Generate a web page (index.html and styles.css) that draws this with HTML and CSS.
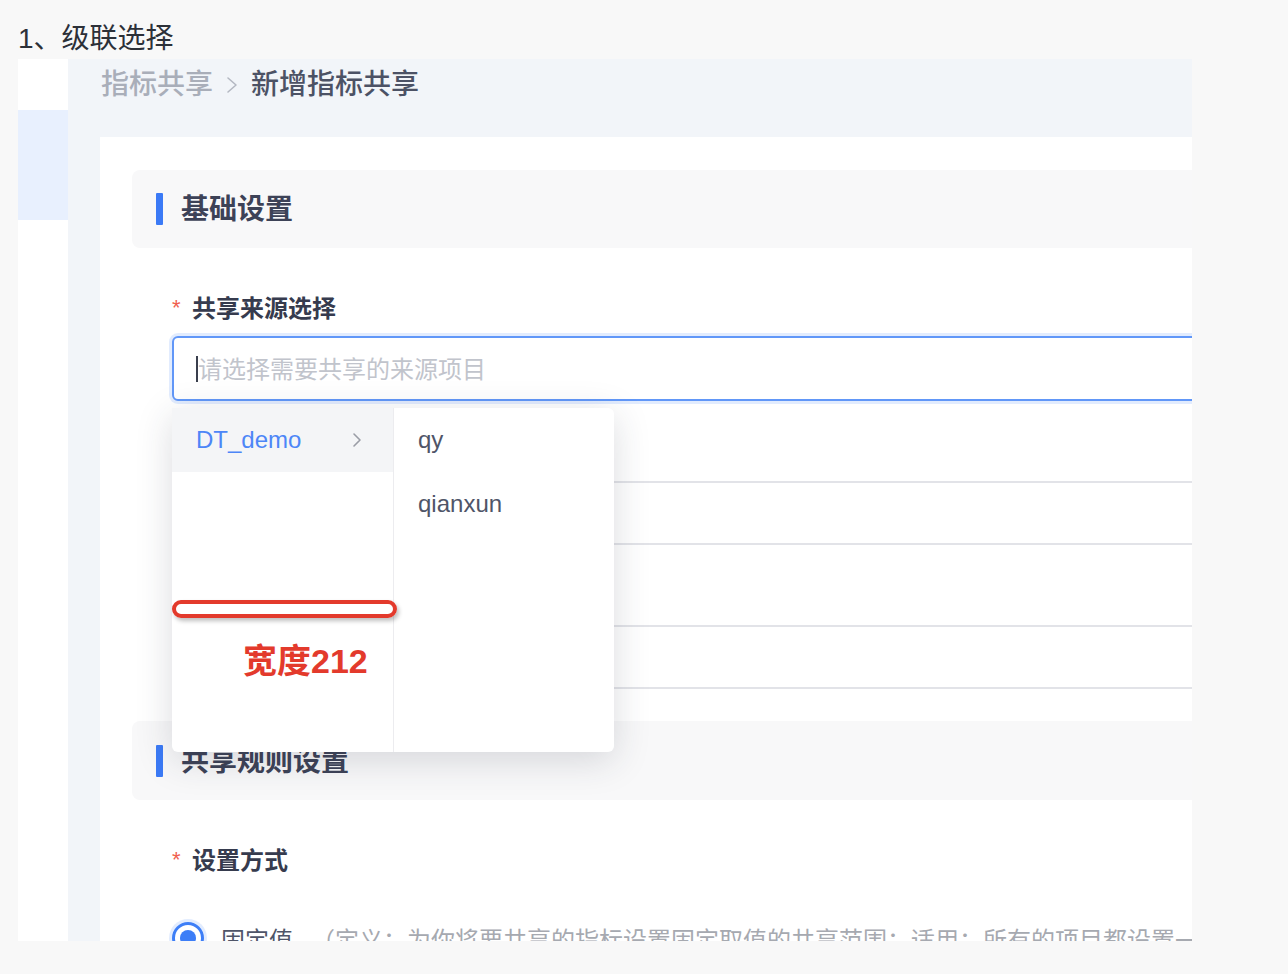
FILE: index.html
```html
<!DOCTYPE html>
<html lang="zh-CN">
<head>
<meta charset="utf-8">
<title>级联选择</title>
<link rel="stylesheet" href="styles.css">
</head>
<body>
<h1 class="doc-title">1、级联选择</h1>
<div class="shot">
  <aside class="sidebar"><div class="side-active"></div></aside>
  <main class="main">
    <div class="crumbs">
      <span class="crumb-prev">指标共享</span>
      <svg class="crumb-sep" width="12" height="20" viewBox="0 0 12 20"><path d="M2 3 L10 10 L2 17" fill="none" stroke="#b4b8c2" stroke-width="1.6" stroke-linecap="round" stroke-linejoin="round"/></svg>
      <span class="crumb-cur">新增指标共享</span>
    </div>
    <div class="panel">
      <div class="section-head"><span class="bar"></span><span class="section-title">基础设置</span></div>
      <div class="form-item">
        <div class="label"><span class="req">*</span>共享来源选择</div>
        <div class="cascader">
          <div class="input"><span class="caret"></span><span class="placeholder">请选择需要共享的来源项目</span></div>
          <div class="popper">
            <ul class="menu menu-first">
              <li class="node active"><span>DT_demo</span>
                <svg class="node-arrow" width="10" height="16" viewBox="0 0 10 16"><path d="M2 2 L8 8 L2 14" fill="none" stroke="#9a9da6" stroke-width="1.6" stroke-linecap="round" stroke-linejoin="round"/></svg>
              </li>
            </ul>
            <ul class="menu menu-second">
              <li class="node">qy</li>
              <li class="node">qianxun</li>
            </ul>
            <div class="note-ring"></div>
            <div class="note-text">宽度212</div>
          </div>
        </div>
        <div class="ghost-list">
          <div class="ghost-row tall"></div>
          <div class="ghost-row short"></div>
          <div class="ghost-row tall"></div>
          <div class="ghost-row short"></div>
        </div>
      </div>
      <div class="section-head second"><span class="bar"></span><span class="section-title">共享规则设置</span></div>
      <div class="form-item">
        <div class="label label-second"><span class="req">*</span>设置方式</div>
        <div class="radio-row">
          <span class="radio-dot"></span>
          <span class="radio-label">固定值</span>
          <span class="radio-desc">（定义：为你将要共享的指标设置固定取值的共享范围；适用：所有的项目都设置一致的共享范围）</span>
        </div>
      </div>
    </div>
  </main>
</div>
</body>
</html>
```

FILE: styles.css
```css
* { box-sizing: border-box; }

html, body {
  margin: 0;
  padding: 0;
  background: #f8f8f8;
  font-family: "Liberation Sans", "Noto Sans CJK SC", sans-serif;
}

.doc-title {
  margin: 0;
  padding: 24px 0 5px 18px;
  font-size: 28px;
  line-height: 30px;
  font-weight: 400;
  color: #2c3038;
}

.shot {
  margin-left: 18px;
  width: 1174px;
  height: 882px;
  display: flex;
  overflow: hidden;
}

.sidebar {
  width: 50px;
  flex: 0 0 50px;
  background: #ffffff;
  padding-top: 51px;
}

.side-active {
  height: 110px;
  background: #e8f0fe;
}

.main {
  flex: 1;
  min-width: 0;
  background: #f2f5f9;
  overflow: hidden;
}

.crumbs {
  height: 78px;
  padding: 6px 0 0 33px;
  display: flex;
  align-items: flex-start;
  line-height: 40px;
  font-size: 28px;
  font-weight: 500;
}

.crumb-prev { color: #a9aeb9; }

.crumb-sep {
  margin: 10px 13px 0 13px;
}

.crumb-cur { color: #4c5265; }

.panel {
  margin-left: 32px;
  margin-right: -300px;
  background: #ffffff;
  padding: 33px 32px 40px 32px;
  min-height: 900px;
}

.section-head {
  height: 78px;
  background: #f8f8f9;
  border-radius: 8px;
  display: flex;
  align-items: center;
  padding-left: 24px;
}

.section-head.second { height: 79px; }

.bar {
  width: 7px;
  height: 32px;
  background: #3b7af6;
  border-radius: 1px;
  margin-right: 18px;
}

.section-title {
  font-size: 28px;
  font-weight: 700;
  color: #3d4257;
  line-height: 32px;
  padding-top: 2px;
}

.form-item {
  margin-left: 40px;
}

.label {
  margin-top: 45px;
  height: 32px;
  line-height: 32px;
  font-size: 24px;
  font-weight: 700;
  color: #363b4e;
  display: flex;
  align-items: center;
}

.req {
  color: #f0604f;
  font-size: 22px;
  font-weight: 400;
  width: 20px;
  margin-top: -2px;
}

.cascader {
  position: relative;
  margin-top: 11px;
}

.input {
  height: 65px;
  border: 2px solid #6197f8;
  border-radius: 6px;
  box-shadow: 0 0 0 3px rgba(97, 151, 248, 0.18);
  display: flex;
  align-items: center;
  padding-left: 22px;
  background: #ffffff;
}

.caret {
  width: 2px;
  height: 26px;
  background: #3a3f4d;
  margin-right: 0;
}

.placeholder {
  font-size: 24px;
  color: #c1c4cc;
  margin-top: -2px;
}

.popper {
  position: absolute;
  top: 72px;
  left: 0;
  width: 442px;
  height: 344px;
  background: #ffffff;
  border-radius: 6px;
  box-shadow: 0 8px 36px rgba(40, 45, 65, 0.17);
  display: flex;
  z-index: 2;
}

.menu {
  list-style: none;
  margin: 0;
  padding: 0;
  width: 221px;
  height: 100%;
}

.menu-second {
  border-left: 1px solid #ececef;
}

.node {
  height: 64px;
  display: flex;
  align-items: center;
  justify-content: space-between;
  padding: 0 31px 0 24px;
  font-size: 24px;
  color: #4f5568;
}

.node.active {
  background: #f4f5f7;
  color: #4d86f7;
}

.note-ring {
  position: absolute;
  left: 0;
  top: 192px;
  width: 225px;
  height: 18px;
  border: 4px solid #e33a2c;
  border-radius: 9px;
  box-shadow: 2px 3px 4px rgba(0, 0, 0, 0.25);
}

.note-text {
  position: absolute;
  left: 71px;
  top: 233px;
  line-height: 40px;
  font-size: 34px;
  font-weight: 700;
  color: #e33a2c;
}

.ghost-list {
  margin-bottom: 32px;
}

.ghost-row {
  border-bottom: 2px solid #e2e3e8;
}

.ghost-row.tall { height: 82px; }
.ghost-row.short { height: 62px; }

.radio-row {
  margin-top: 45px;
  height: 32px;
  display: flex;
  align-items: center;
  white-space: nowrap;
}

.radio-dot {
  width: 32px;
  height: 32px;
  flex: 0 0 32px;
  border: 3px solid #3d7ef7;
  border-radius: 50%;
  box-shadow: 0 0 0 3px rgba(61, 126, 247, 0.15);
  display: flex;
  align-items: center;
  justify-content: center;
}

.radio-dot::after {
  content: "";
  width: 16px;
  height: 16px;
  border-radius: 50%;
  background: #3d7ef7;
}

.radio-label {
  margin-left: 17px;
  font-size: 24px;
  color: #4f5568;
}

.radio-desc {
  margin-left: 18px;
  font-size: 24px;
  color: #a6a9b0;
}
```
